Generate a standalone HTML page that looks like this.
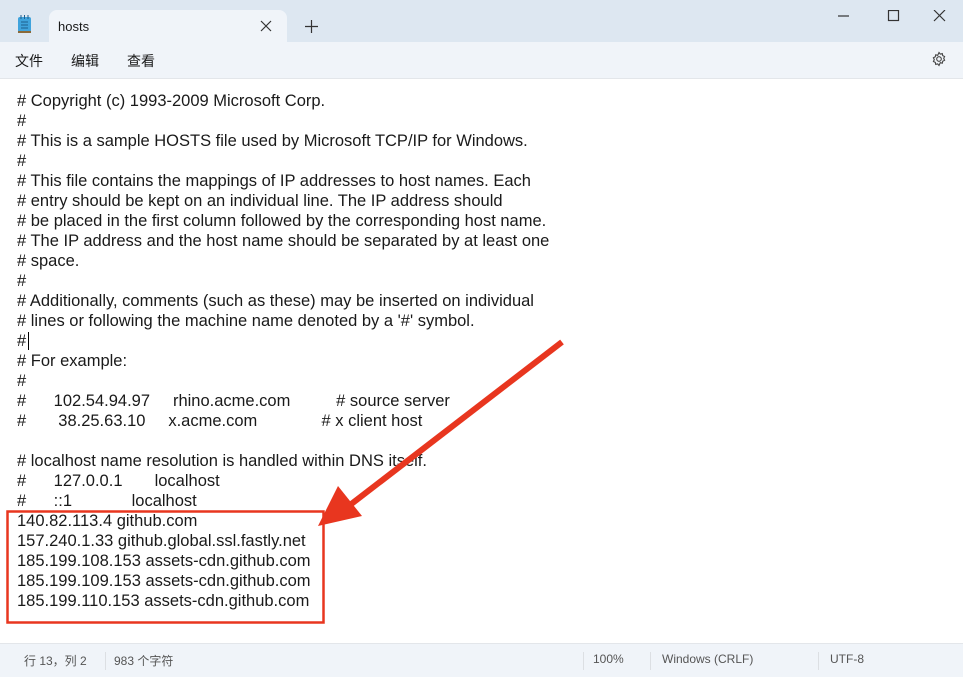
<!DOCTYPE html>
<html><head><meta charset="utf-8"><style>
body{margin:0;width:963px;height:676px;overflow:hidden;background:#fff;font-family:"Liberation Sans","Noto Sans CJK SC",sans-serif;position:relative}
.tabbar{position:absolute;left:0;top:0;width:963px;height:42px;background:#dde7f1}
.tab{position:absolute;left:49px;top:10px;width:238px;height:34px;background:#f0f4f9;border-radius:8px 8px 0 0}
.menu{position:absolute;left:0;top:42px;width:963px;height:36px;background:#f0f4f9;border-bottom:1px solid #e3e6ea}
.menu span{position:absolute;top:9px;font-size:14px;color:#1a1a1a}
.ed{position:absolute;left:17px;top:91px;font-size:16.5px;line-height:20px;color:#1a1a1a;white-space:pre}
.status{position:absolute;left:0;top:643px;width:963px;height:33px;background:#f0f4f9;border-top:1px solid #e3e6ea;font-size:12px;color:#555}
.status span{position:absolute;top:8px}
.sep{position:absolute;top:8px;width:1px;height:18px;background:#dcdfe3}
</style></head><body>
<div class="tabbar"></div>
<div class="tab"></div>
<svg style="position:absolute;left:17px;top:15px" width="16" height="20"><rect x="1" y="2" width="13" height="16" rx="2" fill="#3fa3dc"/><rect x="1" y="16" width="13" height="2" fill="#8a6a3a"/><g stroke="#1d5f8e" stroke-width="1"><line x1="4" y1="7" x2="11" y2="7"/><line x1="4" y1="10" x2="11" y2="10"/><line x1="4" y1="13" x2="11" y2="13"/></g><g stroke="#1d5f8e"><line x1="4" y1="0" x2="4" y2="4"/><line x1="7.5" y1="0" x2="7.5" y2="4"/><line x1="11" y1="0" x2="11" y2="4"/></g></svg>
<span style="position:absolute;left:58px;top:19px;font-size:13px;color:#1a1a1a">hosts</span>
<svg style="position:absolute;left:260px;top:20px" width="12" height="12"><path d="M1 1L11 11M11 1L1 11" stroke="#333" stroke-width="1.2"/></svg>
<svg style="position:absolute;left:305px;top:20px" width="13" height="13"><path d="M6.5 0V13M0 6.5H13" stroke="#333" stroke-width="1.2"/></svg>
<svg style="position:absolute;left:838px;top:10px" width="120" height="12"><path d="M0 6H11" stroke="#333" stroke-width="1.2"/><rect x="50.5" y="0.5" width="10" height="10" fill="none" stroke="#333" stroke-width="1.2"/><path d="M96 0L107 11M107 0L96 11" stroke="#333" stroke-width="1.2"/></svg>
<div class="menu"><span style="left:15px">文件</span><span style="left:71px">编辑</span><span style="left:127px">查看</span>
<svg style="position:absolute;left:931px;top:9px" width="16" height="16" viewBox="0 0 16 16"><circle cx="8" cy="8" r="2.3" fill="none" stroke="#444" stroke-width="1.1"/><path d="M8 1.5l1.3 1.6 2-.5.4 2 1.9.9-.9 1.9.9 1.9-1.9.9-.4 2-2-.5L8 14.5l-1.3-1.6-2 .5-.4-2-1.9-.9.9-1.9-.9-1.9 1.9-.9.4-2 2 .5z" fill="none" stroke="#444" stroke-width="1.1"/></svg></div>
<div class="ed"># Copyright (c) 1993-2009 Microsoft Corp.
#
# This is a sample HOSTS file used by Microsoft TCP/IP for Windows.
#
# This file contains the mappings of IP addresses to host names. Each
# entry should be kept on an individual line. The IP address should
# be placed in the first column followed by the corresponding host name.
# The IP address and the host name should be separated by at least one
# space.
#
# Additionally, comments (such as these) may be inserted on individual
# lines or following the machine name denoted by a '#' symbol.
#
# For example:
#
#      102.54.94.97     rhino.acme.com          # source server
#       38.25.63.10     x.acme.com              # x client host

# localhost name resolution is handled within DNS itself.
#      127.0.0.1       localhost
#      ::1             localhost
140.82.113.4 github.com
157.240.1.33 github.global.ssl.fastly.net
185.199.108.153 assets-cdn.github.com
185.199.109.153 assets-cdn.github.com
185.199.110.153 assets-cdn.github.com</div>
<div style="position:absolute;left:28px;top:332px;width:1px;height:18px;background:#000"></div>
<svg style="position:absolute;left:0;top:0" width="963" height="676">
<rect x="7.5" y="511.5" width="316" height="111" fill="none" stroke="#e8361f" stroke-width="2.5"/>
<line x1="562" y1="342" x2="350" y2="505" stroke="#e8361f" stroke-width="6"/>
<polygon points="318,526 338,486 362,516" fill="#e8361f"/>
</svg>
<div class="status"><span style="left:24px">行 13，列 2</span><div class="sep" style="left:105px"></div><span style="left:114px">983 个字符</span><div class="sep" style="left:583px"></div><span style="left:593px">100%</span><div class="sep" style="left:650px"></div><span style="left:662px">Windows (CRLF)</span><div class="sep" style="left:818px"></div><span style="left:830px">UTF-8</span></div>
</body></html>
